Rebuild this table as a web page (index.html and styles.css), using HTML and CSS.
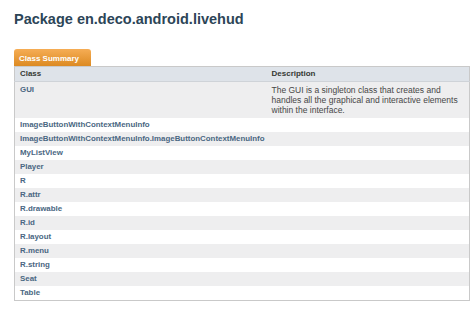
FILE: index.html
```html
<!DOCTYPE html>
<html lang="en">
<head>
    <meta charset="UTF-8">
    <title>en.deco.android.livehud</title>
    <link rel="stylesheet" href="styles.css">
</head>
<body>
    <div class="content">
        <h1 class="title">Package en.deco.android.livehud</h1>

        <div class="summary">
            <div class="tab">Class Summary</div>
            <table class="summary-table">
                <thead>
                    <tr>
                        <th class="col-first">Class</th>
                        <th class="col-last">Description</th>
                    </tr>
                </thead>
                <tbody>
                    <tr class="alt">
                        <td class="col-first"><a href="#">GUI</a></td>
                        <td class="col-last">The GUI is a singleton class that creates and handles all the graphical and interactive elements within the interface.</td>
                    </tr>
                    <tr><td class="col-first"><a href="#">ImageButtonWithContextMenuInfo</a></td><td class="col-last"></td></tr>
                    <tr class="alt"><td class="col-first"><a href="#">ImageButtonWithContextMenuInfo.ImageButtonContextMenuInfo</a></td><td class="col-last"></td></tr>
                    <tr><td class="col-first"><a href="#">MyListView</a></td><td class="col-last"></td></tr>
                    <tr class="alt"><td class="col-first"><a href="#">Player</a></td><td class="col-last"></td></tr>
                    <tr><td class="col-first"><a href="#">R</a></td><td class="col-last"></td></tr>
                    <tr class="alt"><td class="col-first"><a href="#">R.attr</a></td><td class="col-last"></td></tr>
                    <tr><td class="col-first"><a href="#">R.drawable</a></td><td class="col-last"></td></tr>
                    <tr class="alt"><td class="col-first"><a href="#">R.id</a></td><td class="col-last"></td></tr>
                    <tr><td class="col-first"><a href="#">R.layout</a></td><td class="col-last"></td></tr>
                    <tr class="alt"><td class="col-first"><a href="#">R.menu</a></td><td class="col-last"></td></tr>
                    <tr><td class="col-first"><a href="#">R.string</a></td><td class="col-last"></td></tr>
                    <tr class="alt"><td class="col-first"><a href="#">Seat</a></td><td class="col-last"></td></tr>
                    <tr><td class="col-first"><a href="#">Table</a></td><td class="col-last"></td></tr>
                </tbody>
            </table>
        </div>
    </div>
</body>
</html>
```

FILE: styles.css
```css
* {
    margin: 0;
    padding: 0;
    box-sizing: border-box;
}

body {
    background-color: #ffffff;
    font-family: 'Liberation Sans', Arial, sans-serif;
    color: #474747;
}

.content {
    padding: 10px 4px 0 14px;
}

.title {
    font-size: 14.5px;
    font-weight: bold;
    color: #2c4557;
    line-height: 18px;
    margin-bottom: 20px;
}

.tab {
    display: inline-block;
    width: 77px;
    height: 17px;
    padding: 4px 0 0 5px;
    font-size: 8px;
    font-weight: bold;
    color: #ffffff;
    line-height: 12px;
    background: linear-gradient(#f6ad55, #dc8a22);
    border-radius: 3px 3px 0 0;
    vertical-align: bottom;
}

.summary-table {
    width: 456px;
    table-layout: fixed;
    border-collapse: collapse;
    border: 1px solid #c9c9c9;
    font-size: 8.5px;
    line-height: 10px;
}

.summary-table th {
    background-color: #dee3e9;
    color: #353833;
    font-size: 8px;
    font-weight: bold;
    text-align: left;
    height: 15px;
    padding: 2px 5px;
    border-bottom: 1px solid #cfd3d8;
}

.summary-table td {
    height: 14px;
    padding: 2px 5px;
    vertical-align: top;
}

.summary-table .col-first {
    width: 252px;
    font-size: 7.9px;
    white-space: nowrap;
}

.summary-table tr.alt td {
    background-color: #eeeeef;
}

.summary-table tbody tr:first-child td {
    height: 36px;
    padding-top: 3px;
}

.summary-table a {
    color: #4a6782;
    font-weight: bold;
    text-decoration: none;
}
```
